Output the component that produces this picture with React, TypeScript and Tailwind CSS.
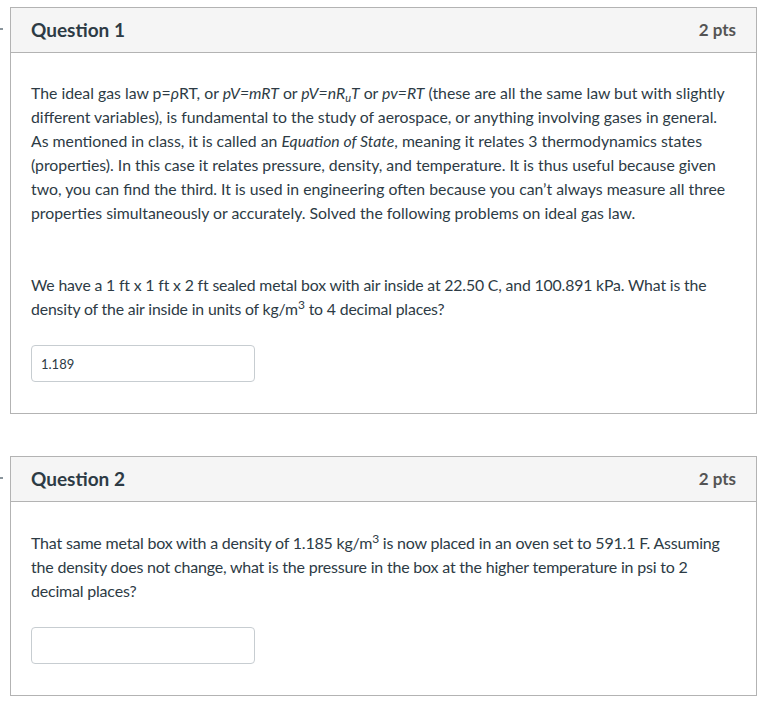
// Quiz page: two question cards, Canvas style.

type Q = {
  title: string;
  points: string;
  answer: string;
  bodyClass: string;
  body: React.ReactNode;
};

const questions: Q[] = [
  {
    title: 'Question 1',
    points: '2 pts',
    answer: '1.189',
    bodyClass: 'pt-[28px] pb-[31px] text-[15.8px]',
    body: (
      <>
        <p>
          The ideal gas law p=<i>ρ</i>RT, or <i>pV=mRT</i> or{' '}
          <i>
            pV=nR<sub className="text-[11px]">u</sub>T
          </i>{' '}
          or <i>pv=RT</i> (these are all the same law but with slightly different variables), is
          fundamental to the study of aerospace, or anything involving gases in general. As
          mentioned in class, it is called an <i>Equation of State</i>, meaning it relates 3
          thermodynamics states (properties). In this case it relates pressure, density, and
          temperature. It is thus useful because given two, you can find the third. It is used in
          engineering often because you can’t always measure all three properties simultaneously
          or accurately. Solved the following problems on ideal gas law.
        </p>
        <p className="mt-[48px] tracking-[-0.15px]">
          We have a 1 ft x 1 ft x 2 ft sealed metal box with air inside at 22.50 C, and 100.891
          kPa. What is the density of the air inside in units of kg/m
          <sup className="text-[12px]">3</sup> to 4 decimal places?
        </p>
      </>
    ),
  },
  {
    title: 'Question 2',
    points: '2 pts',
    answer: '',
    bodyClass: 'pt-[29px] pb-[31px] text-[16px] tracking-[-0.2px]',
    body: (
      <p>
        That same metal box with a density of 1.185 kg/m<sup className="text-[12px]">3</sup> is
        now placed in an oven set to 591.1 F. Assuming the density does not change, what is the
        pressure in the box at the higher temperature in psi to 2 decimal places?
      </p>
    ),
  },
];

function QuestionCard({ q }: { q: Q }) {
  return (
    <div className="relative">
      {/* 좌측 작은 표시 */}
      <div className="absolute -left-[10px] top-[21px] w-[3px] h-[2px] bg-[#8a959c]" />
      <div className="border border-[#b3b3b3] bg-white">
        <div className="flex items-center justify-between h-[45px] px-[20px] bg-[#f5f5f5] border-b border-[#b3b3b3]">
          <h2 className="text-[19px] font-bold text-[#2d3b45]">{q.title}</h2>
          <span className="text-[17px] font-bold text-[#545454]">{q.points}</span>
        </div>
        <div className={`px-[20px] leading-[24px] text-[#2d3b45] ${q.bodyClass}`}>
          {q.body}
          <div className="mt-[24px] w-[224px] h-[37px] border border-[#c7cdd1] rounded-[4px] px-[9px] flex items-center text-[13px] tracking-normal text-[#2d3b45]">
            {q.answer}
          </div>
        </div>
      </div>
    </div>
  );
}

export default function App() {
  return (
    <div
      className="bg-white min-h-screen pl-[10px] pr-[9px] pt-[7px] flex flex-col gap-[42px]"
      style={{ fontFamily: 'Lato, "Liberation Sans", sans-serif' }}
    >
      {questions.map((q) => (
        <QuestionCard key={q.title} q={q} />
      ))}
    </div>
  );
}
